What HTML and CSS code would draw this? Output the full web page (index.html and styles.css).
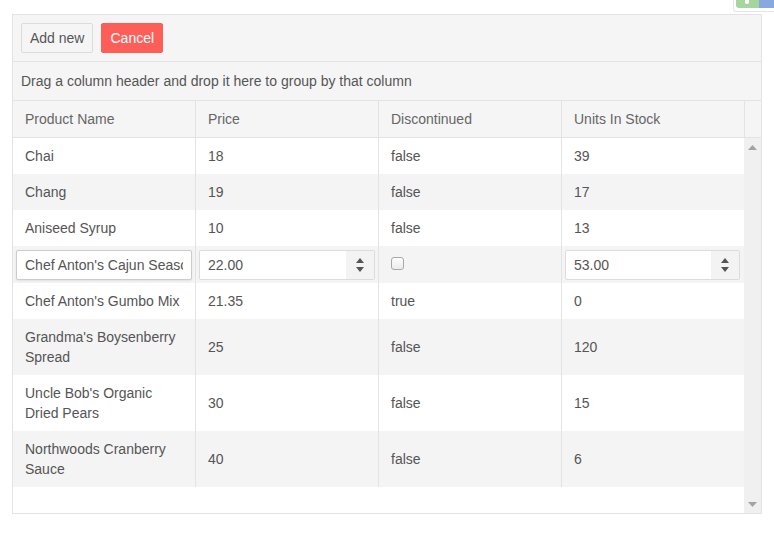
FILE: index.html
```html
<!DOCTYPE html>
<html>
<head>
<meta charset="utf-8">
<link rel="stylesheet" href="styles.css">
</head>
<body>
<div class="corner"><div class="corner-green"><span class="corner-glyph"></span></div><div class="corner-blue"></div></div>
<div class="grid">
  <div class="toolbar">
    <button class="btn">Add new</button>
    <button class="btn btn-cancel">Cancel</button>
  </div>
  <div class="group-panel">Drag a column header and drop it here to group by that column</div>
  <div class="header">
    <div class="hcell">Product Name</div>
    <div class="hcell">Price</div>
    <div class="hcell">Discontinued</div>
    <div class="hcell">Units In Stock</div>
    <div class="hscroll"></div>
  </div>
  <div class="content">
    <div class="rows">
      <div class="row"><div class="cell">Chai</div><div class="cell">18</div><div class="cell">false</div><div class="cell">39</div></div>
      <div class="row alt"><div class="cell">Chang</div><div class="cell">19</div><div class="cell">false</div><div class="cell">17</div></div>
      <div class="row"><div class="cell">Aniseed Syrup</div><div class="cell">10</div><div class="cell">false</div><div class="cell">13</div></div>
      <div class="row alt edit">
        <div class="cell ecell"><input class="tinput" type="text" value="Chef Anton's Cajun Seasoning"></div>
        <div class="cell ecell"><div class="ninput"><span class="nval">22.00</span><span class="spin"><svg width="10" height="18" viewBox="0 0 10 18"><path d="M1 7 L5 2 L9 7 Z M1 11 L9 11 L5 16 Z" fill="#555"/></svg></span></div></div>
        <div class="cell ccell"><span class="check"></span></div>
        <div class="cell ecell"><div class="ninput"><span class="nval">53.00</span><span class="spin"><svg width="10" height="18" viewBox="0 0 10 18"><path d="M1 7 L5 2 L9 7 Z M1 11 L9 11 L5 16 Z" fill="#555"/></svg></span></div></div>
      </div>
      <div class="row"><div class="cell">Chef Anton's Gumbo Mix</div><div class="cell">21.35</div><div class="cell">true</div><div class="cell">0</div></div>
      <div class="row alt"><div class="cell">Grandma's Boysenberry Spread</div><div class="cell">25</div><div class="cell">false</div><div class="cell">120</div></div>
      <div class="row"><div class="cell">Uncle Bob's Organic Dried Pears</div><div class="cell">30</div><div class="cell">false</div><div class="cell">15</div></div>
      <div class="row alt"><div class="cell">Northwoods Cranberry Sauce</div><div class="cell">40</div><div class="cell">false</div><div class="cell">6</div></div>
    </div>
    <div class="vscroll">
      <svg class="arr" width="9" height="5" viewBox="0 0 9 5"><path d="M0 5 L4.5 0 L9 5 Z" fill="#a3a3a3"/></svg>
      <svg class="arr" width="9" height="5" viewBox="0 0 9 5"><path d="M0 0 L9 0 L4.5 5 Z" fill="#a3a3a3"/></svg>
    </div>
  </div>
</div>
</body>
</html>
```
FILE: styles.css
```css
* { box-sizing: border-box; }
body {
  margin: 0;
  background: #fff;
  font-family: "Liberation Sans", Arial, sans-serif;
  font-size: 14px;
  color: #555;
}
.corner {
  position: absolute;
  top: 0;
  right: 0;
  width: 41px;
  height: 12px;
  background: #fff;
  border-left: 1px solid #e6e6e6;
  border-bottom: 1px solid #e6e6e6;
  border-bottom-left-radius: 3px;
  display: flex;
  padding-left: 2px;
}
.corner-green {
  width: 23px;
  height: 8px;
  background: #a6d5a0;
  border-bottom-left-radius: 3px;
  position: relative;
}
.corner-glyph {
  position: absolute;
  left: 9px;
  top: 0;
  width: 4px;
  height: 4px;
  background: #fff;
  border-radius: 0 0 2px 2px;
}
.corner-blue {
  flex: 1;
  height: 8px;
  background: #8aa8e0;
}
.grid {
  margin: 14px 0 0 12px;
  width: 750px;
  height: 500px;
  border: 1px solid #e3e3e3;
  display: flex;
  flex-direction: column;
}
.toolbar {
  background: #f5f5f5;
  border-bottom: 1px solid #e3e3e3;
  height: 47px;
  padding: 8px 8px 0;
  display: flex;
  gap: 8px;
  align-items: flex-start;
}
.btn {
  font-family: "Liberation Sans", Arial, sans-serif;
  font-size: 14px;
  height: 30px;
  padding: 0 8px;
  background: #f5f5f5;
  border: 1px solid #dcdcdc;
  border-radius: 2px;
  color: #555;
}
.btn-cancel {
  background: #fe5e58;
  border-color: #fe5e58;
  color: #fff;
}
.group-panel {
  background: #f5f5f5;
  border-bottom: 1px solid #e3e3e3;
  height: 39px;
  padding: 0 8px;
  display: flex;
  align-items: center;
  line-height: 20px;
}
.header {
  background: #f5f5f5;
  border-bottom: 1px solid #e3e3e3;
  height: 37px;
  display: flex;
}
.hcell {
  width: 183px;
  padding: 0 12px;
  display: flex;
  align-items: center;
  border-right: 1px solid #e3e3e3;
  color: #666;
}
.hscroll { flex: 1; }
.content {
  flex: 1;
  display: flex;
  min-height: 0;
}
.rows {
  width: 731px;
  background: #fff;
}
.row {
  display: flex;
  min-height: 36px;
}
.row.alt { background: #f4f4f4; }
.row.edit { height: 37px; }
.cell {
  width: 183px;
  padding: 8px 12px;
  line-height: 20px;
  display: flex;
  align-items: center;
  border-right: 1px solid #e3e3e3;
}
.cell:last-child { width: 182px; border-right: none; }
.ecell { padding: 0 3px; }
.ecell:last-child { padding: 0 4px 0 3px; }
.tinput {
  width: 176px;
  height: 30px;
  border: 1px solid #cccccc;
  border-radius: 2px;
  padding: 0 8px;
  font-family: "Liberation Sans", Arial, sans-serif;
  font-size: 14px;
  color: #555;
  background: #fff;
  box-shadow: 0 1px 2px rgba(0,0,0,0.08);
  outline: none;
}
.ninput {
  width: 176px;
  height: 30px;
  border: 1px solid #dcdcdc;
  border-radius: 2px;
  background: #fff;
  display: flex;
  align-items: stretch;
}
.nval {
  flex: 1;
  padding: 0 8px;
  display: flex;
  align-items: center;
}
.spin {
  width: 28px;
  background: #f3f3f3;
  display: flex;
  align-items: center;
  justify-content: center;
}
.ccell { align-items: flex-start; padding-top: 11px; }
.check {
  width: 13px;
  height: 13px;
  border: 1px solid #a8a8a8;
  border-radius: 3px;
  background: linear-gradient(#fdfdfd, #ececec);
}
.vscroll {
  flex: 1;
  background: #f0f0f0;
  display: flex;
  flex-direction: column;
  justify-content: space-between;
  align-items: center;
  padding: 7px 0 6px;
}
```
